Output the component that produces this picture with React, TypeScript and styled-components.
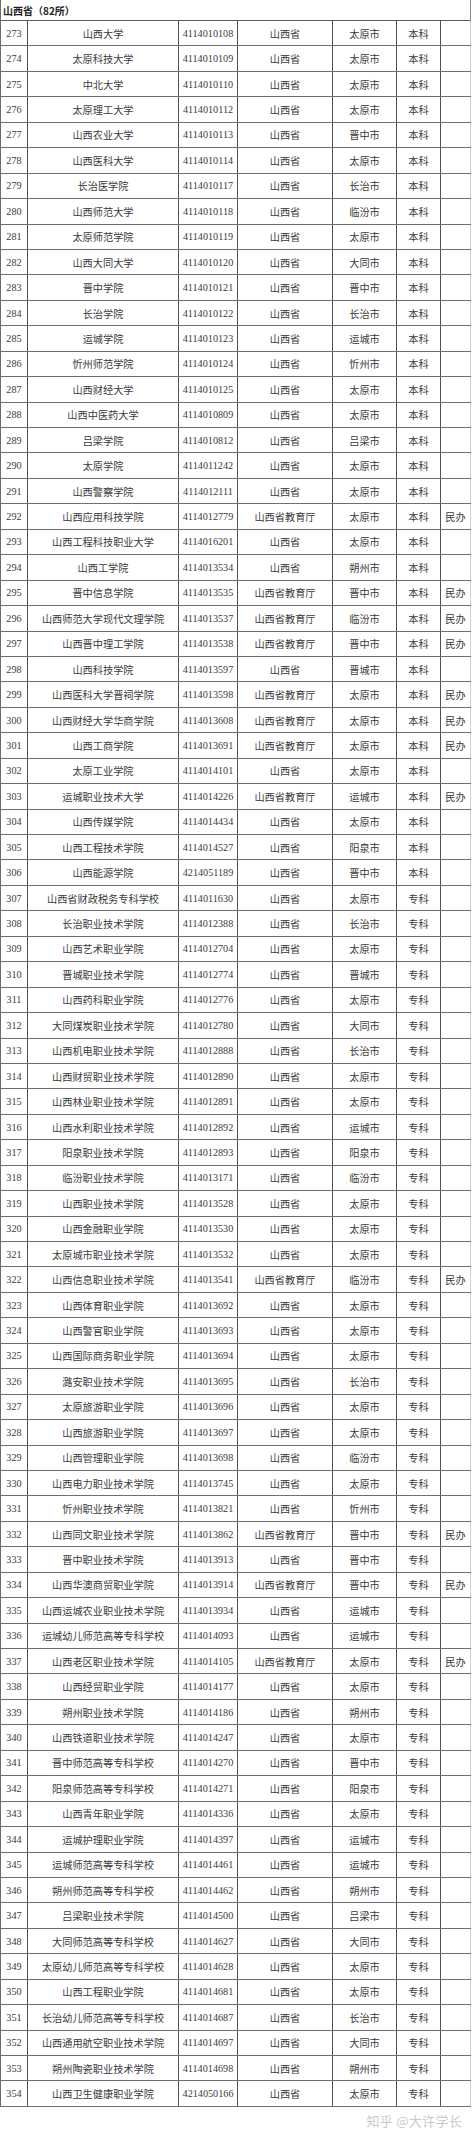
import styled, { createGlobalStyle } from "styled-components";

const GlobalStyle = createGlobalStyle`
	html, body {
		margin: 0;
		padding: 0;
		background: #ffffff;
	}
`;

// 序号从 273 开始，每行：校名 代码 主管部门 所在地 层次 备注
const RAW = `
山西大学 4114010108 山西省 太原市 本科
太原科技大学 4114010109 山西省 太原市 本科
中北大学 4114010110 山西省 太原市 本科
太原理工大学 4114010112 山西省 太原市 本科
山西农业大学 4114010113 山西省 晋中市 本科
山西医科大学 4114010114 山西省 太原市 本科
长治医学院 4114010117 山西省 长治市 本科
山西师范大学 4114010118 山西省 临汾市 本科
太原师范学院 4114010119 山西省 太原市 本科
山西大同大学 4114010120 山西省 大同市 本科
晋中学院 4114010121 山西省 晋中市 本科
长治学院 4114010122 山西省 长治市 本科
运城学院 4114010123 山西省 运城市 本科
忻州师范学院 4114010124 山西省 忻州市 本科
山西财经大学 4114010125 山西省 太原市 本科
山西中医药大学 4114010809 山西省 太原市 本科
吕梁学院 4114010812 山西省 吕梁市 本科
太原学院 4114011242 山西省 太原市 本科
山西警察学院 4114012111 山西省 太原市 本科
山西应用科技学院 4114012779 山西省教育厅 太原市 本科 民办
山西工程科技职业大学 4114016201 山西省 太原市 本科
山西工学院 4114013534 山西省 朔州市 本科
晋中信息学院 4114013535 山西省教育厅 晋中市 本科 民办
山西师范大学现代文理学院 4114013537 山西省教育厅 临汾市 本科 民办
山西晋中理工学院 4114013538 山西省教育厅 晋中市 本科 民办
山西科技学院 4114013597 山西省 晋城市 本科
山西医科大学晋祠学院 4114013598 山西省教育厅 太原市 本科 民办
山西财经大学华商学院 4114013608 山西省教育厅 太原市 本科 民办
山西工商学院 4114013691 山西省教育厅 太原市 本科 民办
太原工业学院 4114014101 山西省 太原市 本科
运城职业技术大学 4114014226 山西省教育厅 运城市 本科 民办
山西传媒学院 4114014434 山西省 太原市 本科
山西工程技术学院 4114014527 山西省 阳泉市 本科
山西能源学院 4214051189 山西省 晋中市 本科
山西省财政税务专科学校 4114011630 山西省 太原市 专科
长治职业技术学院 4114012388 山西省 长治市 专科
山西艺术职业学院 4114012704 山西省 太原市 专科
晋城职业技术学院 4114012774 山西省 晋城市 专科
山西药科职业学院 4114012776 山西省 太原市 专科
大同煤炭职业技术学院 4114012780 山西省 大同市 专科
山西机电职业技术学院 4114012888 山西省 长治市 专科
山西财贸职业技术学院 4114012890 山西省 太原市 专科
山西林业职业技术学院 4114012891 山西省 太原市 专科
山西水利职业技术学院 4114012892 山西省 运城市 专科
阳泉职业技术学院 4114012893 山西省 阳泉市 专科
临汾职业技术学院 4114013171 山西省 临汾市 专科
山西职业技术学院 4114013528 山西省 太原市 专科
山西金融职业学院 4114013530 山西省 太原市 专科
太原城市职业技术学院 4114013532 山西省 太原市 专科
山西信息职业技术学院 4114013541 山西省教育厅 临汾市 专科 民办
山西体育职业学院 4114013692 山西省 太原市 专科
山西警官职业学院 4114013693 山西省 太原市 专科
山西国际商务职业学院 4114013694 山西省 太原市 专科
潞安职业技术学院 4114013695 山西省 长治市 专科
太原旅游职业学院 4114013696 山西省 太原市 专科
山西旅游职业学院 4114013697 山西省 太原市 专科
山西管理职业学院 4114013698 山西省 临汾市 专科
山西电力职业技术学院 4114013745 山西省 太原市 专科
忻州职业技术学院 4114013821 山西省 忻州市 专科
山西同文职业技术学院 4114013862 山西省教育厅 晋中市 专科 民办
晋中职业技术学院 4114013913 山西省 晋中市 专科
山西华澳商贸职业学院 4114013914 山西省教育厅 晋中市 专科 民办
山西运城农业职业技术学院 4114013934 山西省 运城市 专科
运城幼儿师范高等专科学校 4114014093 山西省 运城市 专科
山西老区职业技术学院 4114014105 山西省教育厅 太原市 专科 民办
山西经贸职业学院 4114014177 山西省 太原市 专科
朔州职业技术学院 4114014186 山西省 朔州市 专科
山西铁道职业技术学院 4114014247 山西省 太原市 专科
晋中师范高等专科学校 4114014270 山西省 晋中市 专科
阳泉师范高等专科学校 4114014271 山西省 阳泉市 专科
山西青年职业学院 4114014336 山西省 太原市 专科
运城护理职业学院 4114014397 山西省 运城市 专科
运城师范高等专科学校 4114014461 山西省 运城市 专科
朔州师范高等专科学校 4114014462 山西省 朔州市 专科
吕梁职业技术学院 4114014500 山西省 吕梁市 专科
大同师范高等专科学校 4114014627 山西省 大同市 专科
太原幼儿师范高等专科学校 4114014628 山西省 太原市 专科
山西工程职业学院 4114014681 山西省 太原市 专科
长治幼儿师范高等专科学校 4114014687 山西省 长治市 专科
山西通用航空职业技术学院 4114014697 山西省 大同市 专科
朔州陶瓷职业技术学院 4114014698 山西省 朔州市 专科
山西卫生健康职业学院 4214050166 山西省 太原市 专科
`;

const rows = RAW.trim()
	.split("\n")
	.map((line, i) => {
		const [name, code, dept, city, level, note = ""] = line.trim().split(" ");
		return { no: 273 + i, name, code, dept, city, level, note };
	});

const COLS = [27, 151, 59, 95, 64, 44, 30];

const Page = styled.div`
	height: 2141px;
	display: flex;
	flex-direction: column;
	font-family: "Liberation Serif", "Noto Sans CJK SC", serif;
	color: #3a3a3a;
	background: #ffffff;
	overflow: hidden;
`;

const Sheet = styled.div`
	width: 470px;
	display: flex;
	flex-direction: column;
	border-left: 1px solid #6c6c6c;
`;

const TitleRow = styled.div`
	height: 21px;
	box-sizing: border-box;
	display: flex;
	align-items: center;
	padding-left: 2px;
	border-right: 1px solid #8a8a8a;
	border-bottom: 1px solid #5e5e5e;
	font-family: "Noto Sans CJK SC", sans-serif;
	font-size: 10px;
	font-weight: 700;
	color: #222;
`;

const Row = styled.div`
	height: 25.44px;
	box-sizing: border-box;
	display: grid;
	grid-template-columns: ${COLS.map((w) => `${w}px`).join(" ")};
	border-bottom: 1px solid #6e6e6e;
`;

const Cell = styled.div<{ $last?: boolean }>`
	box-sizing: border-box;
	display: flex;
	align-items: center;
	justify-content: center;
	white-space: nowrap;
	font-size: 10.2px;
	border-right: 1px solid ${(p) => (p.$last ? "#d4d4d4" : "#505050")};
`;

const Footer = styled.div`
	display: flex;
	justify-content: flex-end;
	padding: 6px 12px 0 0;
`;

const Watermark = styled.span`
	font-family: "Noto Sans CJK SC", sans-serif;
	font-size: 13px;
	line-height: 16px;
	color: #c9c9c9;
	letter-spacing: 0.3px;
`;

function App() {
	return (
		<Page>
			<GlobalStyle />
			<Sheet>
				<TitleRow>山西省（82所）</TitleRow>
				{rows.map((r) => (
					<Row key={r.no}>
						<Cell>{r.no}</Cell>
						<Cell>{r.name}</Cell>
						<Cell>{r.code}</Cell>
						<Cell>{r.dept}</Cell>
						<Cell>{r.city}</Cell>
						<Cell>{r.level}</Cell>
						<Cell $last>{r.note}</Cell>
					</Row>
				))}
			</Sheet>
			<Footer>
				<Watermark>知乎 @大许学长</Watermark>
			</Footer>
		</Page>
	);
}

export default App;
